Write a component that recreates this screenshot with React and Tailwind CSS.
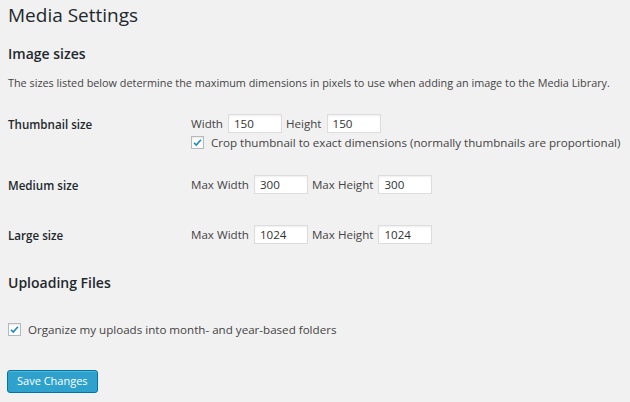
/* App.jsx - Media settings page. */
function Field({ value }) {
  return (
    <input
      className="h-[19px] w-[54px] border border-[#dddddd] bg-white px-[5px] text-[11.6px] text-[#333] shadow-[inset_0_1px_2px_rgba(0,0,0,0.07)] outline-none"
      defaultValue={value}
      type="text"
    />
  )
}

function Check() {
  return (
    <span className="inline-flex h-[13px] w-[13px] shrink-0 items-center justify-center border border-[#b4b9be] bg-white shadow-[inset_0_1px_2px_rgba(0,0,0,0.1)]">
      <svg aria-hidden="true" className="h-[11px] w-[11px]" viewBox="0 0 16 16">
        <path d="M3 8.5l3.2 3.2L13 4" fill="none" stroke="#1e8cbe" strokeWidth="2.4" />
      </svg>
    </span>
  )
}

function Row({ label, children, className = '' }) {
  return (
    <div className={`flex ${className}`}>
      <div className="w-[183px] shrink-0 pt-[2px] text-[11.6px] font-semibold text-[#23282d]">{label}</div>
      <div className="flex flex-col gap-[1px]">{children}</div>
    </div>
  )
}

function SizeInputs({ prefix, value }) {
  return (
    <div className="flex items-center gap-[4px]">
      <span className="mr-[1px]">{prefix}Width</span>
      <Field value={value} />
      <span className="mr-[1px]">{prefix}Height</span>
      <Field value={value} />
    </div>
  )
}

export default function App() {
  return (
    <div className="min-h-[402px] w-[630px] bg-[#f1f1f1] px-[8px] font-['Open_Sans',sans-serif] text-[11.6px] text-[#444]">
      <h1 className="pt-[2px] text-[19px] font-normal leading-[26px] text-[#23282d]">Media Settings</h1>

      <h2 className="mt-[17px] text-[14px] font-semibold leading-[18px] text-[#23282d]">Image sizes</h2>
      <p className="mt-[12px] text-[10.85px] leading-[16px]">
        The sizes listed below determine the maximum dimensions in pixels to use when adding an image to the Media Library.
      </p>

      <Row className="mt-[23px]" label="Thumbnail size">
        <SizeInputs prefix="" value="150" />
        <label className="flex items-center gap-[7px]">
          <Check />
          <span>Crop thumbnail to exact dimensions (normally thumbnails are proportional)</span>
        </label>
      </Row>

      <Row className="mt-[24px]" label="Medium size">
        <SizeInputs prefix="Max " value="300" />
      </Row>

      <Row className="mt-[30px]" label="Large size">
        <SizeInputs prefix="Max " value="1024" />
      </Row>

      <h2 className="mt-[30px] text-[14px] font-semibold leading-[18px] text-[#23282d]">Uploading Files</h2>

      <label className="mt-[29px] flex items-center gap-[7px]">
        <Check />
        <span>Organize my uploads into month- and year-based folders</span>
      </label>

      <button
        className="mt-[31px] -ml-[1px] h-[23px] rounded-[3px] border border-[#0074a2] bg-[#2ea2cc] px-[9px] text-[11px] text-white shadow-[inset_0_1px_0_rgba(120,200,230,0.5)]"
        type="button"
      >
        Save Changes
      </button>
    </div>
  )
}
